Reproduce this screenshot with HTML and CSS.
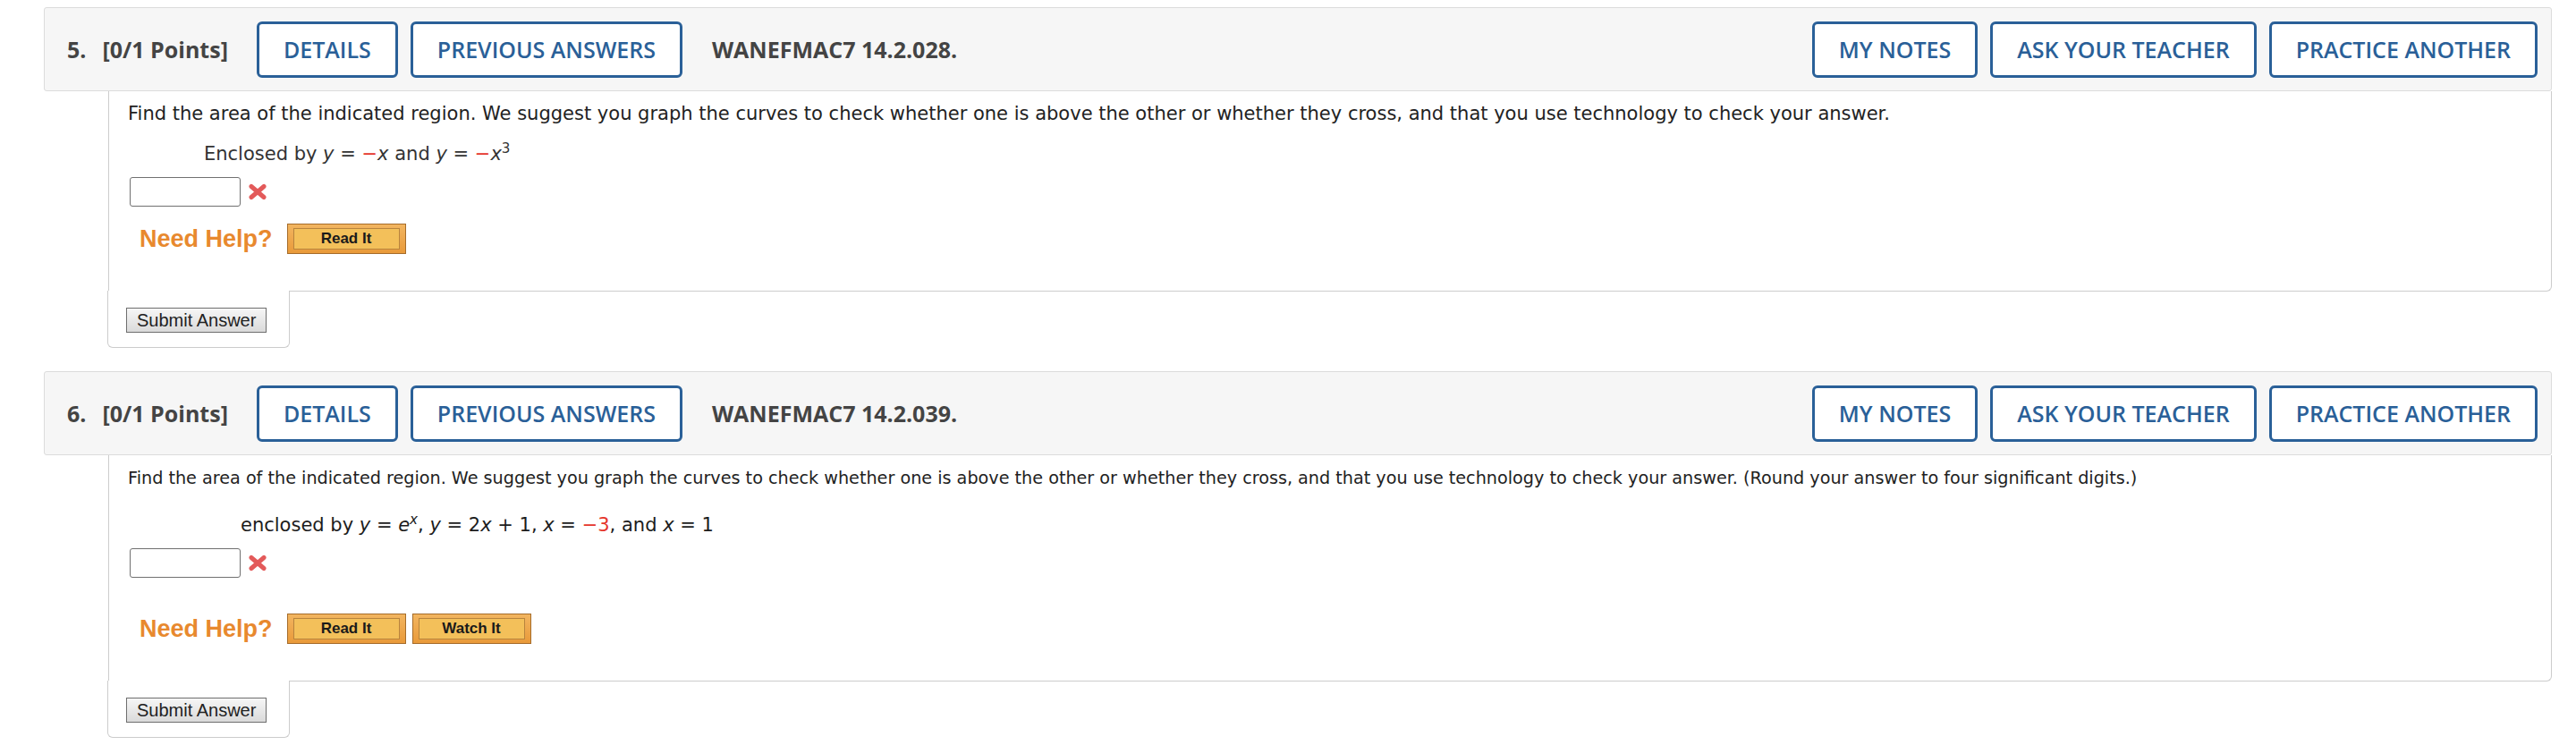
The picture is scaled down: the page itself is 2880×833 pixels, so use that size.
FILE: index.html
```html
<!DOCTYPE html>
<html lang="en">
<head>
<meta charset="utf-8">
<title>WebAssign questions</title>
<link rel="stylesheet" href="styles.css">
</head>
<body>
<div class="page">

  <section class="question">
    <header class="qhead">
      <div class="qlabel"><span class="qnum">5.</span>[0/1 Points]</div>
      <button class="hbtn first">DETAILS</button>
      <button class="hbtn">PREVIOUS ANSWERS</button>
      <div class="qcode">WANEFMAC7 14.2.028.</div>
      <div class="spacer"></div>
      <button class="hbtn">MY NOTES</button>
      <button class="hbtn">ASK YOUR TEACHER</button>
      <button class="hbtn">PRACTICE ANOTHER</button>
    </header>
    <div class="qbody">
      <p class="prompt">Find the area of the indicated region. We suggest you graph the curves to check whether one is above the other or whether they cross, and that you use technology to check your answer.</p>
      <p class="math q5math">Enclosed by <i>y</i> = <span class="neg">&minus;</span><i>x</i> and <i>y</i> = <span class="neg">&minus;</span><i>x</i><sup>3</sup></p>
      <div class="answer">
        <span class="ansbox"></span>
        <svg class="wrong" width="22" height="19" viewBox="0 0 22 19"><path d="M4 3.5 L18 15.5 M18 3.5 L4 15.5" stroke="#e35a5a" stroke-width="5" stroke-linecap="round" fill="none"/></svg>
      </div>
      <div class="help">
        <span class="needhelp">Need Help?</span>
        <button class="hlp"><span>Read It</span></button>
      </div>
    </div>
    <div class="submit-tab"><button class="submit">Submit Answer</button></div>
  </section>

  <section class="question">
    <header class="qhead">
      <div class="qlabel"><span class="qnum">6.</span>[0/1 Points]</div>
      <button class="hbtn first">DETAILS</button>
      <button class="hbtn">PREVIOUS ANSWERS</button>
      <div class="qcode">WANEFMAC7 14.2.039.</div>
      <div class="spacer"></div>
      <button class="hbtn">MY NOTES</button>
      <button class="hbtn">ASK YOUR TEACHER</button>
      <button class="hbtn">PRACTICE ANOTHER</button>
    </header>
    <div class="qbody">
      <p class="prompt prompt-sm">Find the area of the indicated region. We suggest you graph the curves to check whether one is above the other or whether they cross, and that you use technology to check your answer. (Round your answer to four significant digits.)</p>
      <p class="math q6math">enclosed by <i>y</i> = <i>e</i><sup><i>x</i></sup>, <i>y</i> = 2<i>x</i> + 1, <i>x</i> = <span class="neg">&minus;3</span>, and <i>x</i> = 1</p>
      <div class="answer">
        <span class="ansbox"></span>
        <svg class="wrong" width="22" height="19" viewBox="0 0 22 19"><path d="M4 3.5 L18 15.5 M18 3.5 L4 15.5" stroke="#e35a5a" stroke-width="5" stroke-linecap="round" fill="none"/></svg>
      </div>
      <div class="help help-far">
        <span class="needhelp">Need Help?</span>
        <button class="hlp"><span>Read It</span></button>
        <button class="hlp"><span>Watch It</span></button>
      </div>
    </div>
    <div class="submit-tab"><button class="submit">Submit Answer</button></div>
  </section>

</div>
</body>
</html>
```
FILE: styles.css
```css
* { box-sizing: border-box; }

html, body {
  margin: 0;
  padding: 0;
  background: #ffffff;
}

.page {
  padding: 8px 27px 0 49px;
}

.question + .question {
  margin-top: 26px;
}

/* ---------- header bar ---------- */
.qhead {
  display: flex;
  align-items: center;
  height: 94px;
  padding: 0 15px 0 25px;
  background: #f6f6f6;
  border: 1px solid #dcdcdc;
  border-radius: 3px;
  font-family: "Open Sans", "DejaVu Sans", sans-serif;
}

.qlabel {
  font-size: 25px;
  font-weight: 700;
  color: #444444;
  white-space: nowrap;
}

.qnum {
  margin-right: 18px;
}

.qcode {
  margin-left: 33px;
  font-size: 25px;
  font-weight: 700;
  color: #444444;
  white-space: nowrap;
}

.spacer { flex: 1; }

.hbtn {
  height: 63px;
  padding: 0 27px;
  margin-left: 14px;
  background: #ffffff;
  border: 3px solid #2a6098;
  border-radius: 6px;
  color: #2a6098;
  font-family: "Open Sans", "DejaVu Sans", sans-serif;
  font-size: 25px;
  font-weight: 600;
  white-space: nowrap;
  cursor: pointer;
}

.hbtn.first { margin-left: 32px; }

/* ---------- question body ---------- */
.qbody {
  margin-left: 72px;
  padding: 13px 21px 41px 21px;
  border: 1px solid #cccccc;
  border-top: none;
  border-radius: 0 0 6px 0;
  font-family: "DejaVu Sans", Verdana, sans-serif;
}

.prompt {
  margin: 0;
  font-size: 21px;
  line-height: 25px;
  color: #222222;
}

.prompt-sm { font-size: 19.2px; }

.math {
  margin: 18px 0 0 0;
  font-size: 21px;
  line-height: 28px;
  color: #333333;
}

.q5math { padding-left: 85px; }
.q6math { padding-left: 126px; margin-top: 26px; color: #1c1c1c; }

.math sup {
  font-size: 72%;
  line-height: 0;
  vertical-align: super;
}

.neg { color: #e5352b; }

.answer {
  display: flex;
  align-items: center;
  gap: 8px;
  margin: 12px 0 0 2px;
}

.ansbox {
  display: block;
  width: 124px;
  height: 33px;
  border: 1px solid #707070;
  border-radius: 3px;
  background: #ffffff;
}

.wrong { display: block; }

.help {
  display: flex;
  align-items: center;
  gap: 7px;
  margin: 19px 0 0 13px;
}

.help-far { margin-top: 40px; }

.needhelp {
  margin-right: 9px;
  font-family: "Liberation Sans", Arial, sans-serif;
  font-size: 27px;
  font-weight: 700;
  color: #e8892e;
}

.hlp {
  display: block;
  width: 133px;
  height: 34px;
  padding: 4px 6px;
  background: linear-gradient(#f2b560, #e99a3a);
  border: 1px solid #a56c2b;
  cursor: pointer;
}

.hlp span {
  display: flex;
  align-items: center;
  justify-content: center;
  height: 100%;
  background: #f3c05a;
  border: 1px solid #b8843e;
  font-family: "Liberation Sans", Arial, sans-serif;
  font-size: 17px;
  font-weight: 700;
  color: #1a1a1a;
}

/* ---------- submit tab ---------- */
.submit-tab {
  width: 204px;
  height: 64px;
  margin: -1px 0 0 71px;
  padding: 19px 0 0 20px;
  background: #ffffff;
  border: 1px solid #cccccc;
  border-top: none;
  border-radius: 0 0 6px 6px;
}

.submit {
  display: block;
  height: 28px;
  padding: 0 11px;
  background: linear-gradient(#f6f6f6, #dadada);
  border: 1px solid #6e6e6e;
  border-radius: 0;
  font-family: "Liberation Sans", Arial, sans-serif;
  font-size: 20px;
  color: #222222;
  cursor: pointer;
}
```
